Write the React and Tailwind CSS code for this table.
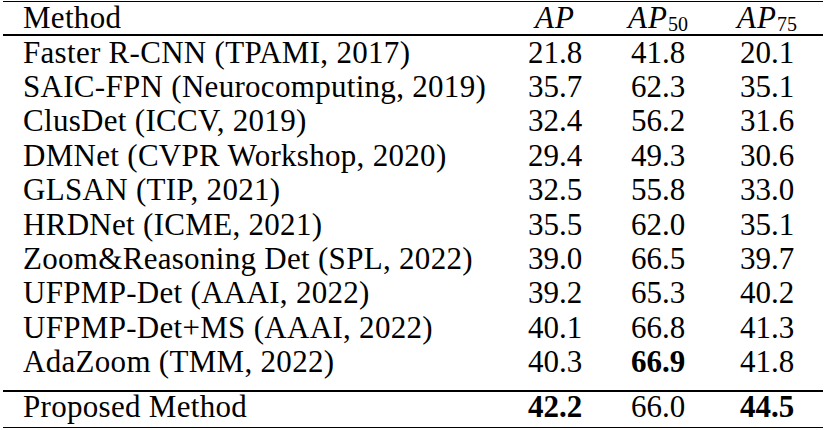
import React from 'react';

const rows = [
  ['Faster R-CNN (TPAMI, 2017)', '21.8', '41.8', '20.1'],
  ['SAIC-FPN (Neurocomputing, 2019)', '35.7', '62.3', '35.1'],
  ['ClusDet (ICCV, 2019)', '32.4', '56.2', '31.6'],
  ['DMNet (CVPR Workshop, 2020)', '29.4', '49.3', '30.6'],
  ['GLSAN (TIP, 2021)', '32.5', '55.8', '33.0'],
  ['HRDNet (ICME, 2021)', '35.5', '62.0', '35.1'],
  ['Zoom&Reasoning Det (SPL, 2022)', '39.0', '66.5', '39.7'],
  ['UFPMP-Det (AAAI, 2022)', '39.2', '65.3', '40.2'],
  ['UFPMP-Det+MS (AAAI, 2022)', '40.1', '66.8', '41.3'],
  ['AdaZoom (TMM, 2022)', '40.3', '66.9', '41.8', [false, true, false]],
];

const cols = 'grid grid-cols-[502px_100px_106px_112px] leading-[24px]';

const Cell = ({ children, bold }) => (
  <div className={`text-center ${bold ? 'font-bold' : ''}`}>{children}</div>
);

const Ap = ({ sub }) => (
  <span className="whitespace-nowrap">
    <span className="italic tracking-[1px]">AP</span>
    {sub && <span className="text-[20px] relative top-[3px]">{sub}</span>}
  </span>
);

const Name = ({ children }) => (
  <div className="pl-[20px] whitespace-nowrap tracking-[0.3px]">{children}</div>
);

const Rule = () => <div className="h-[1.5px] bg-black" />;

const Row = ({ name, a, b, c, bold = [false, false, false], h }) => (
  <div className={`${cols} ${h} pt-[2.6px]`}>
    <Name>{name}</Name>
    <Cell bold={bold[0]}>{a}</Cell>
    <Cell bold={bold[1]}>{b}</Cell>
    <Cell bold={bold[2]}>{c}</Cell>
  </div>
);

export default function App() {
  return (
    <div className="w-[828px] h-[430px] bg-white text-black pl-[3px] pt-[0.5px] font-['Liberation_Serif','Times_New_Roman',serif]">
      <div className="w-[820px] text-[31px]">
        <Rule />
        <div className={`${cols} h-[32px] pt-[3.5px]`}>
          <Name>Method</Name>
          <Cell><Ap /></Cell>
          <Cell><Ap sub="50" /></Cell>
          <Cell><Ap sub="75" /></Cell>
        </div>
        <Rule />
        <div className="pt-[2.5px]">
          {rows.map(([name, a, b, c, bold], i) => (
            <Row
              key={name}
              name={name}
              a={a}
              b={b}
              c={c}
              bold={bold}
              h={i === rows.length - 1 ? 'h-[42.9px]' : 'h-[34.4px]'}
            />
          ))}
        </div>
        <Rule />
        <div className={`${cols} h-[35px] pt-[3.5px]`}>
          <Name>Proposed Method</Name>
          <Cell bold>42.2</Cell>
          <Cell>66.0</Cell>
          <Cell bold>44.5</Cell>
        </div>
        <Rule />
      </div>
    </div>
  );
}
